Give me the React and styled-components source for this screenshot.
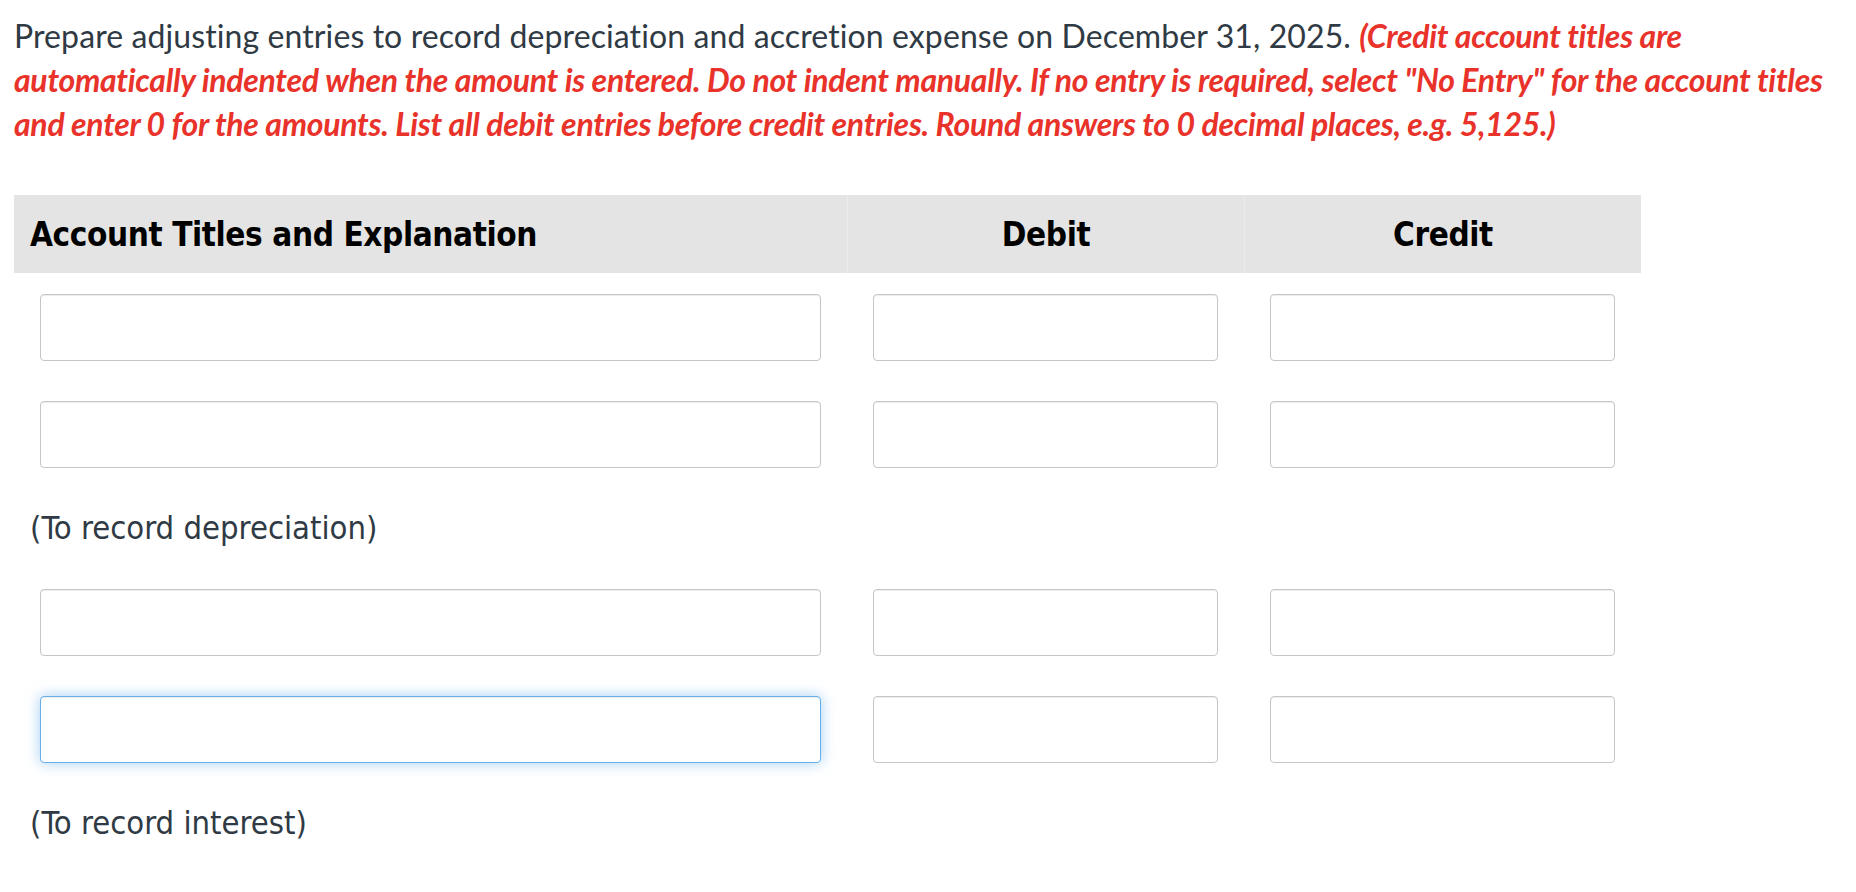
import styled, { createGlobalStyle, css } from 'styled-components';

const GlobalStyle = createGlobalStyle`
    html, body {
        margin: 0;
        padding: 0;
        background: #ffffff;
    }
    body {
        font-family: Lato, "Open Sans", sans-serif;
        color: #2f3a44;
    }
`;

const rows = [
    { id: 'dep-1' },
    { id: 'dep-2' },
    { label: '(To record depreciation)' },
    { id: 'int-1' },
    { id: 'int-2', focused: true },
    { label: '(To record interest)' },
];

function App() {
    return (
        <Page>
            <GlobalStyle />
            <Question>
                Prepare adjusting entries to record depreciation and accretion expense on December 31, 2025.{' '}
                <Note>
                    (Credit account titles are<br />
                    automatically indented when the amount is entered. Do not indent manually. If no entry is required, select "No Entry" for the account titles<br />
                    and enter 0 for the amounts. List all debit entries before credit entries. Round answers to 0 decimal places, e.g. 5,125.)
                </Note>
            </Question>

            <Table>
                <HeaderRow>
                    <HeaderCell>Account Titles and Explanation</HeaderCell>
                    <HeaderCell $center $divider>Debit</HeaderCell>
                    <HeaderCell $center $divider>Credit</HeaderCell>
                </HeaderRow>

                {rows.map((row, i) => {
                    if (row.label) {
                        return <Explanation key={i}>{row.label}</Explanation>;
                    }
                    return (
                        <EntryRow key={row.id}>
                            <Cell><Field type="text" $focused={row.focused} /></Cell>
                            <Cell><Field type="text" /></Cell>
                            <Cell><Field type="text" /></Cell>
                        </EntryRow>
                    );
                })}
            </Table>
        </Page>
    );
}

const Page = styled.div`
    padding: 14px 14px 0 14px;
`;

const Question = styled.p`
    margin: 0 0 49px 0;
    font-family: Lato, "Open Sans", sans-serif;
    font-size: 32px;
    line-height: 44px;
    color: #2f3a44;
    white-space: nowrap;
    font-variant-ligatures: none;
    letter-spacing: 0.1px;
`;

const Note = styled.span`
    color: #e8322a;
    font-style: italic;
    font-weight: 700;
    letter-spacing: -0.3px;
`;

const Table = styled.div`
    width: 1627px;
`;

const columns = css`
    display: grid;
    grid-template-columns: 833px 397px 397px;
`;

const HeaderRow = styled.div`
    ${columns}
    height: 78px;
    background: #e4e4e4;
`;

const HeaderCell = styled.div`
    display: flex;
    align-items: center;
    justify-content: ${props => props.$center ? 'center' : 'flex-start'};
    padding: 0 16px;

    font-family: "DejaVu Sans Condensed", "DejaVu Sans", sans-serif;
    font-weight: 700;
    font-size: 33px;
    letter-spacing: -0.4px;
    color: #000000;

    border-left: ${props => props.$divider ? '1px solid #ececec' : '0'};
`;

const EntryRow = styled.div`
    ${columns}
    padding: 21px 0 19px 0;
`;

const Cell = styled.div`
    padding: 0 26px 0 26px;
`;

const Field = styled.input`
    display: block;
    box-sizing: border-box;
    width: 100%;
    height: 67px;
    margin: 0;
    padding: 0 12px;

    background: #ffffff;
    border: 1.5px solid #c6c6c6;
    border-radius: 4px;
    outline: none;
    box-shadow: inset 0 1px 1px rgba(0, 0, 0, 0.075);

    ${props => props.$focused && css`
        border-color: #66afe9;
        box-shadow: inset 0 1px 1px rgba(0, 0, 0, 0.075), 0 0 14px rgba(102, 175, 233, 0.6);
    `}
`;

const Explanation = styled.div`
    height: 81px;
    display: flex;
    align-items: center;
    padding: 0 16px;

    font-family: "DejaVu Sans Condensed", "DejaVu Sans", sans-serif;
    font-size: 32.5px;
    color: #2f3a44;
`;

export default App;
